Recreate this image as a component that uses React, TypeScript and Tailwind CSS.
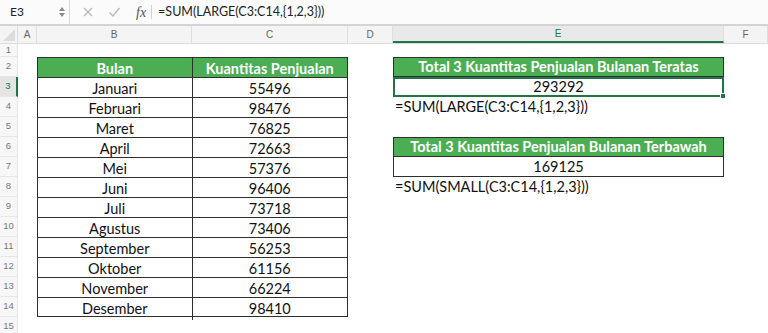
const months = [
  ["Januari", "55496"],
  ["Februari", "98476"],
  ["Maret", "76825"],
  ["April", "72663"],
  ["Mei", "57376"],
  ["Juni", "96406"],
  ["Juli", "73718"],
  ["Agustus", "73406"],
  ["September", "56253"],
  ["Oktober", "61156"],
  ["November", "66224"],
  ["Desember", "98410"],
];

const cols = ["", "A", "B", "C", "D", "E", "F"];

const font = { fontFamily: "Lato, 'Open Sans', sans-serif" };

function FormulaBar() {
  return (
    <div className="flex h-[26px] items-center bg-[#fbfbfb] border-b-2 border-[#d4d4d4] text-[12px] text-[#222]">
      <div className="flex w-[70px] h-full items-center justify-between pl-[10px] pr-[3px] border-r border-[#d8d8d8]">
        <span>E3</span>
        <svg width="8" height="14" viewBox="0 0 8 14">
          <path d="M4 2 L7 6 L1 6 Z" fill="#8a8a8a" />
          <path d="M4 12 L7 8 L1 8 Z" fill="#8a8a8a" />
        </svg>
      </div>
      <div className="flex items-center h-full">
        <svg className="ml-[12px]" width="12" height="12" viewBox="0 0 12 12">
          <path d="M2 2 L10 10 M10 2 L2 10" stroke="#b8b8b8" strokeWidth="1.3" />
        </svg>
        <svg className="ml-[14px]" width="13" height="12" viewBox="0 0 13 12">
          <path d="M1.5 6.5 L5 10 L11.5 2" stroke="#b8b8b8" strokeWidth="1.3" fill="none" />
        </svg>
        <span className="ml-[15px] italic text-[14px] text-[#555]" style={{ fontFamily: "'Liberation Serif', serif" }}>
          fx
        </span>
        <div className="ml-[5px] h-[14px] border-l border-[#d0d0d0]" />
        <span className="ml-[6px] text-[12.5px]" style={font}>=SUM(LARGE(C3:C14,{"{1,2,3}"}))</span>
      </div>
    </div>
  );
}

function GreenHeader({ text }: { text: string }) {
  return (
    <div className="h-[20px] bg-[#4cae52] border border-[#2e2e2e] text-white font-bold flex items-center justify-center">
      {text}
    </div>
  );
}

export default function App() {
  return (
    <div className="w-[768px] h-[333px] bg-white overflow-hidden" style={{ fontFamily: "Lato, sans-serif" }}>
      <FormulaBar />

      <div className="grid grid-cols-[18px_19px_155px_156px_45px_331px_1fr] h-[18px] bg-[#f4f4f4] border-b border-[#dcdcdc] text-[10px] text-[#666]" style={{ fontFamily: "'Liberation Sans', sans-serif" }}>
        {cols.map((c, i) => (
          <div
            key={i}
            className={
              "flex items-center justify-center border-r border-[#dedede] " +
              (c === "E" ? "bg-[#e9e9e9] border-b-2 border-b-[#227447] text-[#227447]" : "")
            }
          >
            {i === 0 ? (
              <svg width="14" height="14" viewBox="0 0 14 14">
                <path d="M13 1 L13 13 L1 13 Z" fill="#dcdcdc" />
              </svg>
            ) : (
              c
            )}
          </div>
        ))}
      </div>

      <div className="grid grid-cols-[18px_19px_155px_156px_45px_331px_1fr] grid-rows-[13px_repeat(14,20px)] text-[14.5px] text-[#111]" style={font}>
        {Array.from({ length: 15 }).map((_, i) => (
          <div
            key={i}
            className={
              "col-start-1 flex items-center justify-center text-[9.5px] border-b border-[#e6e6e6] " +
              (i === 2 ? "bg-[#e4e4e4] border-r-2 border-r-[#227447] text-[#227447]" : "bg-[#f7f7f7] text-[#777] border-r border-[#dedede]")
            }
            style={{ gridRow: i + 1, fontFamily: "'Liberation Sans', sans-serif" }}
          >
            {i + 1}
          </div>
        ))}

        <div className="col-start-3 col-span-2 row-start-2 row-span-13 border border-[#2e2e2e] flex flex-col">
          <div className="h-[20px] grid grid-cols-2 bg-[#4cae52] text-white font-bold border-b border-[#2e2e2e]">
            <div className="flex items-center justify-center border-r border-[#2e2e2e]">Bulan</div>
            <div className="flex items-center justify-center">Kuantitas Penjualan</div>
          </div>
          {months.map(([m, q], i) => (
            <div key={m} className={"h-[20px] grid grid-cols-2 " + (i < months.length - 1 ? "border-b border-[#2e2e2e]" : "")}>
              <div className="flex items-center justify-center border-r border-[#2e2e2e]">{m}</div>
              <div className="flex items-center justify-center">{q}</div>
            </div>
          ))}
        </div>

        <div className="col-start-6 row-start-2 row-span-3 flex flex-col">
          <GreenHeader text="Total 3 Kuantitas Penjualan Bulanan Teratas" />
          <div className="relative h-[20px] border-2 border-[#227447] flex items-center justify-center">
            293292
            <div className="absolute -right-[4px] -bottom-[4px] w-[6px] h-[6px] bg-[#227447] border border-white" />
          </div>
          <div className="h-[20px] flex items-center pl-[2px]">=SUM(LARGE(C3:C14,{"{1,2,3}"}))</div>
        </div>

        <div className="col-start-6 row-start-6 row-span-3 flex flex-col">
          <GreenHeader text="Total 3 Kuantitas Penjualan Bulanan Terbawah" />
          <div className="h-[20px] border border-t-0 border-[#2e2e2e] flex items-center justify-center">169125</div>
          <div className="h-[20px] flex items-center pl-[2px]">=SUM(SMALL(C3:C14,{"{1,2,3}"}))</div>
        </div>
      </div>
    </div>
  );
}
